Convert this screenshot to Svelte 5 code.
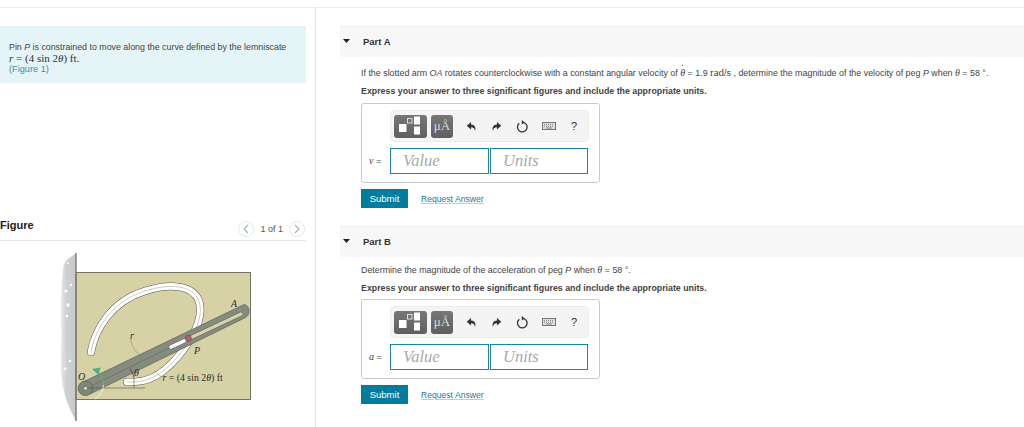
<script lang="ts">
  const parts = [
    {
      title: 'Part A',
      symbol: 'v',
      kind: 'velocity'
    },
    {
      title: 'Part B',
      symbol: 'a',
      kind: 'acceleration'
    }
  ];
  const curve = 'M41 103C45 80 62 52 95 42C120 34 143 36 149 52C154 68 144 86 134 100C122 116 108 129 92 132C86 133 81 133 77 133';
</script>

<div class="page">
  <aside class="left">
    <div class="intro">
      <div>Pin <i>P</i> is constrained to move along the curve defined by the lemniscate</div>
      <div class="math-line"><i>r</i> = (4 sin 2<i>θ</i>) ft.</div>
      <div class="fig-link">(Figure 1)</div>
    </div>

    <div class="figure-head">
      <span class="figure-title">Figure</span>
      <div class="pager">
        <span class="circle">
          <svg width="8" height="10" viewBox="0 0 8 10"><path d="M6 1 2 5l4 4" fill="none" stroke="#9fb4bd" stroke-width="1.2" /></svg>
        </span>
        <span class="count">1 of 1</span>
        <span class="circle">
          <svg width="8" height="10" viewBox="0 0 8 10"><path d="M2 1l4 4-4 4" fill="none" stroke="#9fb4bd" stroke-width="1.2" /></svg>
        </span>
      </div>
    </div>

    <svg class="diagram" width="210" height="175" viewBox="0 0 210 175">
      <defs>
        <linearGradient id="wall" x1="0" x2="1" y1="0" y2="0">
          <stop offset="0" stop-color="#e6e7e8" />
          <stop offset="0.35" stop-color="#cfd1d3" />
          <stop offset="1" stop-color="#c6c8ca" />
        </linearGradient>
      </defs>
      <path d="M26 4C22 8 14 10 13 20C10 40 12 80 11 110C10 135 16 155 26 172Z" fill="url(#wall)" />
      <g fill="#fff">
        <circle cx="18" cy="14" r="1" /><circle cx="16" cy="42" r="1.6" /><circle cx="21" cy="36" r="1.2" />
        <circle cx="18" cy="56" r="1.7" /><circle cx="10" cy="63" r="1" /><circle cx="17" cy="67" r="1.2" />
        <circle cx="20" cy="112" r="1.2" /><circle cx="15" cy="120" r="1.4" />
      </g>
      <rect x="26" y="23.500" width="174.500" height="127" fill="#d6d2a6" stroke="#55564a" stroke-width="0.8" />
      <path d="M26 4V172" stroke="#77797b" stroke-width="1.4" />

      <!-- lemniscate slot -->
      <path d={curve} fill="none" stroke="#55564a" stroke-width="7.800" stroke-linecap="round" />
      <path d={curve} fill="none" stroke="#fff" stroke-width="6.800" stroke-linecap="round" />
      <path d={curve} fill="none" stroke="#a9aa98" stroke-width="0.6" />

      <!-- slotted arm -->
      <path d="M33 133L193 56C196 54.500 199 58 199 62C199 65 198 67 195.500 68.500L40 145Z" fill="#868b80" stroke="#5c5f58" stroke-width="0.7" />
      <path d="M121 98L191 65" stroke="#5c5f58" stroke-width="4.400" stroke-linecap="round" />
      <path d="M121 98L191 65" stroke="#d6d2a6" stroke-width="3.400" stroke-linecap="round" />
      <path d="M121 98L134 92" stroke="#fff" stroke-width="3.400" stroke-linecap="round" />
      <path d="M37 139L119 99" stroke="#5c5f58" stroke-width="0.5" />
      <circle cx="35.500" cy="139.300" r="7.300" fill="#80857a" stroke="#5c5f58" stroke-width="0.8" />
      <circle cx="35.500" cy="139.300" r="1.200" fill="#e9e9e4" />
      <circle cx="138.300" cy="89.300" r="3" fill="#b4606c" stroke="#5c3a40" stroke-width="0.5" />

      <!-- dimensions -->
      <path d="M38 139H95M84 139V123" stroke="#55564a" stroke-width="0.6" fill="none" />
      <path d="M80 120C82 122 83 125 83.500 128" stroke="#33342c" stroke-width="0.7" fill="none" />
      <path d="M90 106.500C84 101 81 96 81 90" stroke="#77786a" stroke-width="0.5" fill="none" />
      <path d="M113 128C109 127 106 124 105 121.500" stroke="#77786a" stroke-width="0.5" fill="none" />
      <path d="M45 150C50 147 53 142 53.500 136" stroke="#eef6ef" stroke-width="0.9" fill="none" />
      <path d="M53.500 136C53.500 130 51 125 47.500 122" stroke="#5cb38c" stroke-width="0.9" fill="none" />
      <path d="M42 120 50.500 118.500 48.500 126Z" fill="#4fae84" />

      <g class="fig-text">
        <text x="28" y="131" font-style="italic">O</text>
        <text x="80" y="90" font-style="italic">r</text>
        <text x="84" y="127" font-style="italic">θ</text>
        <text x="144" y="105" font-style="italic">P</text>
        <text x="181" y="58" font-style="italic">A</text>
        <text x="112.500" y="132" class="eq"><tspan font-style="italic">r</tspan> = (4 sin 2<tspan font-style="italic">θ</tspan>) ft</text>
      </g>
    </svg>
  </aside>

  <main class="right">
    {#each parts as part (part.title)}
      <section class="part">
        <div class="part-head">
          <svg class="caret" width="7" height="4" viewBox="0 0 7 4"><path d="M0 0h7L3.500 4Z" fill="#222" /></svg>
          <span>{part.title}</span>
        </div>
        <div class="part-body">
          {#if part.kind === 'velocity'}
            <p class="question tall">
              If the slotted arm <i>OA</i> rotates counterclockwise with a constant angular velocity of
              <span class="theta-dot"><i class="serif">θ</i><b></b></span> = 1.9 <span class="serif unit">rad</span>/s , determine the magnitude of the velocity of peg <i>P</i> when <i class="serif">θ</i> = 58 °.
            </p>
          {:else}
            <p class="question">
              Determine the magnitude of the acceleration of peg <i>P</i> when <i class="serif">θ</i> = 58 °.
            </p>
          {/if}
          <p class="instruction">Express your answer to three significant figures and include the appropriate units.</p>

          <div class="answer-box" class:first={part.kind === 'velocity'}>
            <div class="toolbar">
              <span class="tool tool-tpl">
                <svg width="33" height="22" viewBox="0 0 33 22">
                  <rect x="5" y="9" width="7.500" height="8" fill="#fff" />
                  <rect x="13.500" y="3.500" width="4.500" height="4.500" fill="none" stroke="#e8e8e8" stroke-width="0.9" />
                  <rect x="20" y="1.500" width="6" height="8" fill="#fff" />
                  <rect x="20" y="11.500" width="6" height="8" fill="#fff" />
                </svg>
              </span>
              <span class="tool tool-mu"><span>μ</span><span>Å</span></span>
              <svg class="ic undo" width="11" height="11" viewBox="0 0 12 12"><path d="M5.500 1 .8 5.200l4.700 4V6.800C8 6.800 9.500 8 9.800 10.800 11.200 7 9.500 3.800 5.500 3.700Z" fill="#333" /></svg>
              <svg class="ic redo" width="11" height="11" viewBox="0 0 12 12"><path d="M6.500 1l4.700 4.200-4.700 4V6.800C4 6.800 2.500 8 2.200 10.800.8 7 2.500 3.800 6.500 3.700Z" fill="#333" /></svg>
              <svg class="ic reset" width="12" height="14" viewBox="0 0 12 14"><path d="M7.700 3.500A4.800 4.800 0 1 1 3.300 4.300" fill="none" stroke="#333" stroke-width="1.300" /><path d="M5.800 1l3 2.400-3 2Z" fill="#333" /></svg>
              <svg class="ic keys" width="14" height="8" viewBox="0 0 14 8"><rect x=".5" y=".5" width="13" height="7" fill="#dedede" stroke="#777" /><path d="M2 2.500h10M2 4.300h10" stroke="#888" stroke-dasharray="1 1" /><path d="M4 6h6" stroke="#888" /></svg>
              <span class="help">?</span>
            </div>
            <div class="answer-row">
              <span class="symbol"><i class="serif">{part.symbol}</i> =</span>
              <span class="field">Value</span>
              <span class="field units">Units</span>
            </div>
          </div>

          <div class="actions">
            <span class="submit">Submit</span>
            <span class="request">Request Answer</span>
          </div>
        </div>
      </section>
    {/each}
  </main>
</div>

<style>
  :global(body) {
    margin: 0;
    background: #fff;
  }
  .page {
    display: flex;
    width: 1024px;
    height: 427px;
    overflow: hidden;
    box-sizing: border-box;
    padding-top: 7px;
    font-family: 'Liberation Sans', Arial, sans-serif;
    font-size: 9.500px;
    color: #444;
    background: linear-gradient(#e9ecee, #e9ecee) 0 7px / 100% 1px no-repeat;
  }
  i {
    font-style: italic;
  }
  .serif {
    font-family: 'Liberation Serif', serif;
  }
  .left {
    flex: 0 0 316px;
    box-sizing: border-box;
    border-right: 1px solid #dfe4e8;
    padding-top: 19px;
    padding-right: 9px;
  }
  .intro {
    box-sizing: border-box;
    height: 57px;
    background: #e5f4f6;
    border-top: 1px solid #e0eff1;
    padding: 15px 0 0 9px;
    line-height: 10.500px;
    font-size: 8.830px;
  }
  .math-line {
    font-family: 'Liberation Serif', serif;
    font-size: 11px;
    color: #333;
  }
  .fig-link {
    margin-top: 1px;
    color: #3d8fb0;
    font-size: 9.200px;
  }
  .figure-head {
    display: flex;
    justify-content: space-between;
    align-items: center;
    height: 31px;
    margin-top: 127px;
    padding-top: 4px;
    border-bottom: 1px solid #e4e8ea;
    box-sizing: border-box;
  }
  .figure-title {
    margin-top: -5px;
    font-weight: bold;
    font-size: 11px;
    color: #222;
  }
  .pager {
    display: flex;
    align-items: center;
    gap: 6px;
    margin-top: 4px;
    padding-right: 1px;
  }
  .circle {
    display: flex;
    align-items: center;
    justify-content: center;
    width: 16px;
    height: 16px;
    border: 1px solid #e3e8ea;
    border-radius: 50%;
    box-sizing: border-box;
  }
  .count {
    font-size: 9px;
    color: #555;
  }
  .diagram {
    display: block;
    margin: 8px 0 0 50px;
  }
  .fig-text text {
    font-family: 'Liberation Serif', serif;
    font-size: 10px;
    fill: #2c2c28;
  }
  .fig-text .eq {
    font-size: 9.800px;
  }
  .right {
    flex: 1;
    padding: 19px 0 0 24px;
    min-width: 0;
  }
  .part {
    height: 200px;
  }
  .part-head {
    display: flex;
    align-items: center;
    gap: 13px;
    height: 31px;
    box-sizing: border-box;
    padding: 0 0 2px 3px;
    background: #f7f7f7;
    border-top: 1px solid #f0f0f0;
    font-weight: bold;
    font-size: 9.500px;
    color: #333;
  }
  .part-body {
    padding-left: 21px;
  }
  .question {
    margin: 7px 0 0;
    height: 11px;
    line-height: 11px;
    font-size: 8.880px;
    white-space: nowrap;
  }
  .question.tall {
    height: 14px;
    line-height: 17px;
  }
  .question .serif {
    font-size: 10px;
  }
  .question .unit {
    font-size: 11px;
  }
  .theta-dot {
    position: relative;
    display: inline-block;
  }
  .theta-dot b {
    position: absolute;
    left: 2px;
    top: 1px;
    width: 1px;
    height: 1px;
    background: #444;
  }
  .instruction {
    margin: 8px 0 0;
    line-height: 11px;
    font-size: 8.820px;
    font-weight: bold;
  }
  .answer-box {
    box-sizing: border-box;
    width: 239px;
    height: 80px;
    margin-top: 5px;
    padding: 6px 0 0 28px;
    border: 1px solid #c9c9c9;
    border-radius: 3px;
  }
  .answer-box.first {
    margin-top: 6px;
  }
  .toolbar {
    display: flex;
    align-items: center;
    box-sizing: border-box;
    width: 199px;
    height: 32px;
    padding-left: 3px;
    background: #f4f4f4;
    border: 1px solid #ebebeb;
    border-radius: 4px;
  }
  .tool {
    display: flex;
    align-items: center;
    justify-content: center;
    height: 23px;
    background: linear-gradient(#777, #5f5f5f);
    border-radius: 3px;
  }
  .tool-tpl {
    width: 33px;
  }
  .tool-mu {
    width: 22px;
    margin-left: 4px;
    color: #dcdcdc;
    font-family: 'Liberation Serif', serif;
    font-size: 13px;
  }
  .ic {
    flex: none;
  }
  .undo {
    margin-left: 13px;
  }
  .redo {
    margin-left: 14px;
  }
  .reset {
    margin-left: 14px;
  }
  .keys {
    margin-left: 14px;
  }
  .help {
    margin-left: 15px;
    font-size: 11px;
    color: #333;
  }
  .answer-row {
    position: relative;
    display: flex;
    gap: 1px;
    margin-top: 6px;
  }
  .symbol {
    position: absolute;
    left: -21px;
    top: 7px;
    font-size: 9px;
  }
  .symbol .serif {
    font-size: 10px;
  }
  .field {
    box-sizing: border-box;
    width: 99px;
    height: 26px;
    padding-left: 12px;
    border: 1px solid #1c85a5;
    font-family: 'Liberation Serif', serif;
    font-style: italic;
    font-size: 16.500px;
    line-height: 24px;
    color: #a9a9a9;
  }
  .units {
    width: 98px;
  }
  .actions {
    display: flex;
    align-items: center;
    gap: 13px;
    margin-top: 6px;
  }
  .submit {
    display: flex;
    align-items: center;
    justify-content: center;
    width: 47px;
    height: 19px;
    background: #007c9e;
    color: #fff;
    font-size: 9.500px;
  }
  .request {
    color: #1a7a9c;
    font-size: 8.600px;
    text-decoration: underline;
    text-decoration-color: #a9d3e0;
  }
</style>
